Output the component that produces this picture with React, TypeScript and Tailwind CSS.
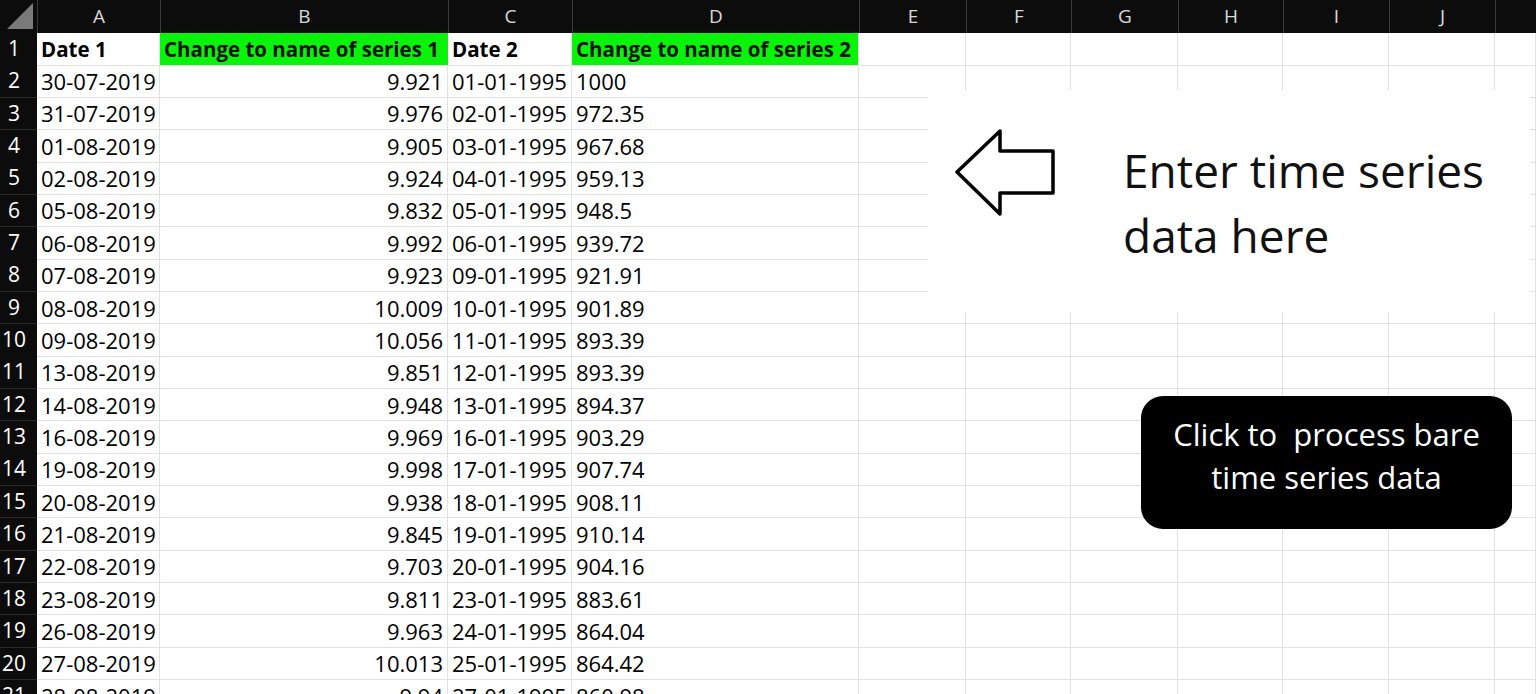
import React from "react"

const cols = ["A", "B", "C", "D", "E", "F", "G", "H", "I", "J", ""]

// datos de la hoja
const rows: [string, string, string, string][] = [
  ["30-07-2019", "9.921", "01-01-1995", "1000"],
  ["31-07-2019", "9.976", "02-01-1995", "972.35"],
  ["01-08-2019", "9.905", "03-01-1995", "967.68"],
  ["02-08-2019", "9.924", "04-01-1995", "959.13"],
  ["05-08-2019", "9.832", "05-01-1995", "948.5"],
  ["06-08-2019", "9.992", "06-01-1995", "939.72"],
  ["07-08-2019", "9.923", "09-01-1995", "921.91"],
  ["08-08-2019", "10.009", "10-01-1995", "901.89"],
  ["09-08-2019", "10.056", "11-01-1995", "893.39"],
  ["13-08-2019", "9.851", "12-01-1995", "893.39"],
  ["14-08-2019", "9.948", "13-01-1995", "894.37"],
  ["16-08-2019", "9.969", "16-01-1995", "903.29"],
  ["19-08-2019", "9.998", "17-01-1995", "907.74"],
  ["20-08-2019", "9.938", "18-01-1995", "908.11"],
  ["21-08-2019", "9.845", "19-01-1995", "910.14"],
  ["22-08-2019", "9.703", "20-01-1995", "904.16"],
  ["23-08-2019", "9.811", "23-01-1995", "883.61"],
  ["26-08-2019", "9.963", "24-01-1995", "864.04"],
  ["27-08-2019", "10.013", "25-01-1995", "864.42"],
  ["28-08-2019", "9.94", "27-01-1995", "860.98"],
]

const gridCols =
  "grid grid-cols-[37px_123px_288px_124px_287px_107px_105px_107px_105px_106px_106px_41px]"

const cell = "border-r border-b border-[#e1e1e1] px-[4px] flex items-center pt-[1px] overflow-hidden whitespace-nowrap"

const Row = ({ n, children }: { n: number; children: React.ReactNode }) => (
  <div className={`${gridCols} h-[32.35px]`}>
    <div className="bg-[#0c0c0c] text-white text-[21px] flex items-center justify-center pr-[9px] border-b border-[#2a2a2a]">
      {n}
    </div>
    {children}
  </div>
)

const Empties = () => (
  <>
    {Array.from({ length: 7 }).map((_, i) => (
      <div key={i} className={cell} />
    ))}
  </>
)

export default function App() {
  return (
    <div
      className="relative w-[1536px] h-[694px] overflow-hidden bg-white text-black"
      style={{ fontFamily: "'Open Sans', 'Liberation Sans', sans-serif" }}
    >
      {/* Encabezado de columnas */}
      <div className={`${gridCols} h-[33px] bg-[#0c0c0c]`}>
        <div className="relative">
          <div className="absolute right-[4px] bottom-[4px] w-0 h-0 border-l-[26px] border-l-transparent border-b-[26px] border-b-[#7a7a7a]" />
        </div>
        {cols.map((c, i) => (
          <div
            key={i}
            className="border-l border-[#3a3a3a] text-[#d9d9d9] text-[19px] flex items-center justify-center"
          >
            {c}
          </div>
        ))}
      </div>

      {/* Fila 1 */}
      <Row n={1}>
        <div className={`${cell} font-bold text-[20.5px]`}>Date 1</div>
        <div className={`${cell} font-bold text-[20.5px] bg-[#0af30a] border-r-[#0af30a] text-[#111]`}>
          Change to name of series 1
        </div>
        <div className={`${cell} font-bold text-[20.5px]`}>Date 2</div>
        <div className={`${cell} font-bold text-[20.5px] bg-[#0af30a] text-[#111]`}>
          Change to name of series 2
        </div>
        <Empties />
      </Row>

      {rows.map((r, i) => (
        <Row key={i} n={i + 2}>
          <div className={`${cell} text-[22px]`}>{r[0]}</div>
          <div className={`${cell} text-[22px] justify-end`}>{r[1]}</div>
          <div className={`${cell} text-[22px]`}>{r[2]}</div>
          <div className={`${cell} text-[22px]`}>{r[3]}</div>
          <Empties />
        </Row>
      ))}

      {/* Cuadro de texto con flecha */}
      <div className="absolute left-[928px] top-[90px] w-[602px] h-[222px] bg-white flex items-start pt-[38px]">
        <svg width="104" height="92" viewBox="0 0 104 92" className="ml-[25px] shrink-0">
          <path
            d="M4 44 L47 3 L47 23 L100 23 L100 65 L47 65 L47 86 Z"
            fill="none"
            stroke="#000"
            strokeWidth="3.5"
            strokeLinejoin="round"
          />
        </svg>
        <div className="ml-[66px] mt-[10px] text-[46px] leading-[65px] text-[#111]">
          Enter time series
          <br />
          data here
        </div>
      </div>

      {/* Botón */}
      <button className="absolute left-[1141px] top-[396px] w-[371px] h-[133px] rounded-[22px] bg-black text-white text-[31px] leading-[43px] flex flex-col items-center justify-center pb-[14px]">
        <span className="whitespace-pre">Click to  process bare</span>
        <span>time series data</span>
      </button>
    </div>
  )
}
